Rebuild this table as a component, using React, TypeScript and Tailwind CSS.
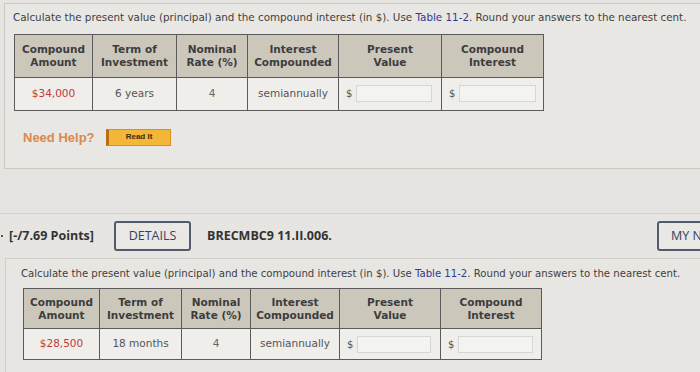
import React from "react";

type Row = { amount: string; term: string; rate: string; comp: string };

const HEADERS = [
  ["Compound", "Amount"],
  ["Term of", "Investment"],
  ["Nominal", "Rate (%)"],
  ["Interest", "Compounded"],
  ["Present", "Value"],
  ["Compound", "Interest"],
];

const openSans = { fontFamily: '"Open Sans", "DejaVu Sans", sans-serif' };

function Intro({ size }: { size: string }) {
  return (
    <p className={`${size} text-[#3f3f3f] whitespace-nowrap`}>
      Calculate the present value (principal) and the compound interest (in $). Use{" "}
      <span className="text-[#2e3b8f]">Table 11-2</span>. Round your answers to the nearest cent.
    </p>
  );
}

function MoneyCell({ boxW }: { boxW: string }) {
  return (
    <td className="border border-[#5b5b5b] bg-[#efeeeb] pl-[7px] overflow-hidden">
      <div className="flex items-center gap-[4px]">
        <span className="text-[#555] text-[10px]">$</span>
        <div className={`${boxW} h-[17px] border border-[#d6d6d3] bg-[#f3f3f1]`} />
      </div>
    </td>
  );
}

function QuestionTable({
  row,
  widths,
  headH,
  rowH,
  boxes,
}: {
  row: Row;
  widths: number[];
  headH: string;
  rowH: string;
  boxes: [string, string];
}) {
  const total = widths.reduce((a, b) => a + b, 0);
  return (
    <table className="border-collapse table-fixed" style={{ width: total }}>
      <colgroup>
        {widths.map((w, i) => (
          <col key={i} style={{ width: w }} />
        ))}
      </colgroup>
      <thead>
        <tr className={headH}>
          {HEADERS.map(([a, b]) => (
            <th
              key={a + b}
              className="border border-[#5b5b5b] bg-[#ccc7bb] text-[#3d3d3d] text-[10.5px] font-bold leading-[13px] text-center"
            >
              {a}
              <br />
              {b}
            </th>
          ))}
        </tr>
      </thead>
      <tbody>
        <tr className={rowH}>
          <td className="border border-[#5b5b5b] bg-[#efeeeb] text-center text-[10.5px] text-[#c0393d]">
            {row.amount}
          </td>
          <td className="border border-[#5b5b5b] bg-[#efeeeb] text-center text-[10.5px] text-[#555]">
            {row.term}
          </td>
          <td className="border border-[#5b5b5b] bg-[#efeeeb] text-center text-[10.5px] text-[#666]">
            {row.rate}
          </td>
          <td className="border border-[#5b5b5b] bg-[#efeeeb] text-center text-[10.5px] text-[#555]">
            {row.comp}
          </td>
          <MoneyCell boxW={boxes[0]} />
          <MoneyCell boxW={boxes[1]} />
        </tr>
      </tbody>
    </table>
  );
}

export default function App() {
  return (
    <div
      className="w-[700px] h-[372px] overflow-hidden bg-[#e5e4e0]"
      style={{ fontFamily: '"DejaVu Sans", Verdana, sans-serif' }}
    >
      {/* first question, tail end */}
      <section className="ml-[4px] mt-[3px] h-[166px] border-t border-l border-b border-[#c9c8c3] bg-[#e8e7e3]">
        <div className="pl-[8px] pt-[6px]">
          <Intro size="text-[10.35px]" />
        </div>
        <div className="ml-[9px] mt-[8px]">
          <QuestionTable
            row={{ amount: "$34,000", term: "6 years", rate: "4", comp: "semiannually" }}
            widths={[78, 84, 71, 91, 103, 102]}
            headH="h-[43px]"
            rowH="h-[33px]"
            boxes={["w-[76px]", "w-[77px]"]}
          />
        </div>
        <div className="flex items-center gap-[11px] ml-[18px] mt-[17px]">
          <span
            className="text-[13px] font-bold text-[#d9894d]"
            style={{ fontFamily: '"Liberation Sans", Arial, sans-serif' }}
          >
            Need Help?
          </span>
          <button
            className="w-[65px] h-[17px] bg-[#f4b637] border border-[#d9901f] border-l-[3px] border-l-[#b86f12] text-[8px] font-bold text-[#3a2a10] leading-none"
            style={{ fontFamily: '"Liberation Sans", Arial, sans-serif' }}
          >
            Read It
          </button>
        </div>
      </section>

      <div className="h-[44px]" />

      {/* next question header */}
      <div className="border-t border-[#d3d2ce] h-[45px] flex items-center bg-[#e6e5e1]" style={openSans}>
        <span className="ml-[1px] w-[2px] h-[2px] bg-[#555]" />
        <span className="ml-[6px] text-[12.5px] font-bold text-[#333]">[-/7.69 Points]</span>
        <span className="ml-[20px] w-[77px] h-[30px] border-2 border-[#525b6e] rounded-[3px] flex items-center justify-center text-[12.5px] font-medium text-[#34425e] bg-[#e9e8e5]">
          DETAILS
        </span>
        <span className="ml-[16px] text-[12.5px] font-bold text-[#333]">BRECMBC9 11.II.006.</span>
        <span className="ml-auto -mr-[40px] w-[83px] h-[30px] border-2 border-[#525b6e] rounded-[3px] flex items-center pl-[12px] text-[12.5px] font-medium text-[#34425e] bg-[#e9e8e5] whitespace-nowrap">
          MY NOTES
        </span>
      </div>

      <section className="ml-[5px] border-t border-l border-[#cfcec9] h-[120px] bg-[#e7e6e2]">
        <div className="pl-[15px] pt-[7px]">
          <Intro size="text-[10.15px]" />
        </div>
        <div className="ml-[17px] mt-[7px]">
          <QuestionTable
            row={{ amount: "$28,500", term: "18 months", rate: "4", comp: "semiannually" }}
            widths={[76, 82, 69, 89, 101, 101]}
            headH="h-[40px]"
            rowH="h-[31px]"
            boxes={["w-[74px]", "w-[75px]"]}
          />
        </div>
      </section>
    </div>
  );
}
